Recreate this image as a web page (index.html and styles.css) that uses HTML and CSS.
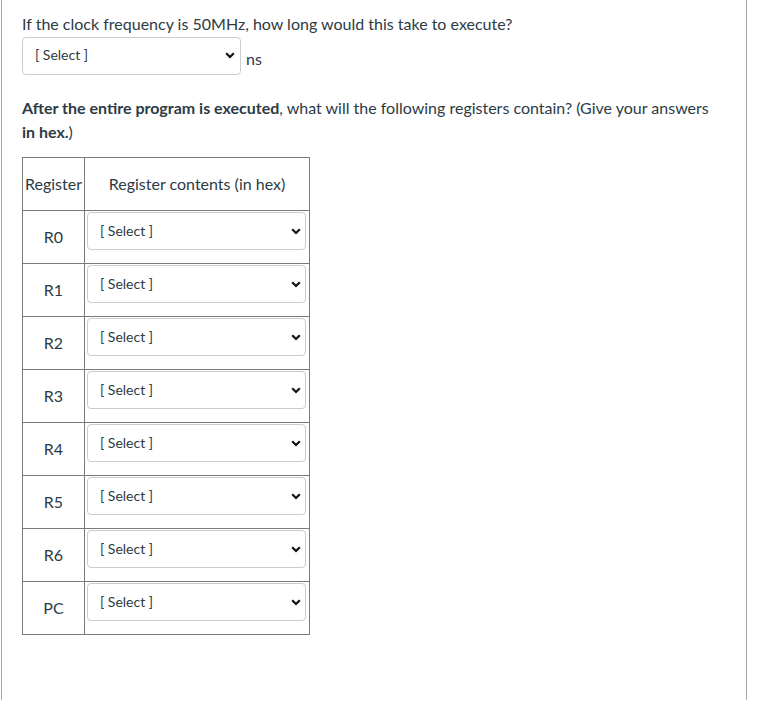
FILE: index.html
```html
<!DOCTYPE html>
<html>
<head>
<meta charset="utf-8">
<link rel="stylesheet" href="styles.css">
</head>
<body>
<div class="frame">
  <p class="q">If the clock frequency is 50MHz, how long would this take to execute?</p>
  <div class="answer-row">
    <div class="sel">
      <span class="sel-text">[ Select ]</span>
      <svg class="chev" width="10" height="7" viewBox="0 0 10 7"><polyline points="1.2,1.2 5,5 8.8,1.2" fill="none" stroke="#111" stroke-width="2.2"/></svg>
    </div>
    <span class="unit">ns</span>
  </div>
  <p class="q2"><strong>After the entire program is executed</strong>, what will the following registers contain? (Give your answers <strong>in hex.</strong>)</p>
  <table class="regs">
    <thead>
      <tr><th class="c1">Register</th><th class="c2">Register contents (in hex)</th></tr>
    </thead>
    <tbody>
      <tr><td class="c1">R0</td><td class="c2"><div class="sel"><span class="sel-text">[ Select ]</span><svg class="chev" width="10" height="7" viewBox="0 0 10 7"><polyline points="1.2,1.2 5,5 8.8,1.2" fill="none" stroke="#111" stroke-width="2.2"/></svg></div></td></tr>
      <tr><td class="c1">R1</td><td class="c2"><div class="sel"><span class="sel-text">[ Select ]</span><svg class="chev" width="10" height="7" viewBox="0 0 10 7"><polyline points="1.2,1.2 5,5 8.8,1.2" fill="none" stroke="#111" stroke-width="2.2"/></svg></div></td></tr>
      <tr><td class="c1">R2</td><td class="c2"><div class="sel"><span class="sel-text">[ Select ]</span><svg class="chev" width="10" height="7" viewBox="0 0 10 7"><polyline points="1.2,1.2 5,5 8.8,1.2" fill="none" stroke="#111" stroke-width="2.2"/></svg></div></td></tr>
      <tr><td class="c1">R3</td><td class="c2"><div class="sel"><span class="sel-text">[ Select ]</span><svg class="chev" width="10" height="7" viewBox="0 0 10 7"><polyline points="1.2,1.2 5,5 8.8,1.2" fill="none" stroke="#111" stroke-width="2.2"/></svg></div></td></tr>
      <tr><td class="c1">R4</td><td class="c2"><div class="sel"><span class="sel-text">[ Select ]</span><svg class="chev" width="10" height="7" viewBox="0 0 10 7"><polyline points="1.2,1.2 5,5 8.8,1.2" fill="none" stroke="#111" stroke-width="2.2"/></svg></div></td></tr>
      <tr><td class="c1">R5</td><td class="c2"><div class="sel"><span class="sel-text">[ Select ]</span><svg class="chev" width="10" height="7" viewBox="0 0 10 7"><polyline points="1.2,1.2 5,5 8.8,1.2" fill="none" stroke="#111" stroke-width="2.2"/></svg></div></td></tr>
      <tr><td class="c1">R6</td><td class="c2"><div class="sel"><span class="sel-text">[ Select ]</span><svg class="chev" width="10" height="7" viewBox="0 0 10 7"><polyline points="1.2,1.2 5,5 8.8,1.2" fill="none" stroke="#111" stroke-width="2.2"/></svg></div></td></tr>
      <tr><td class="c1">PC</td><td class="c2"><div class="sel"><span class="sel-text">[ Select ]</span><svg class="chev" width="10" height="7" viewBox="0 0 10 7"><polyline points="1.2,1.2 5,5 8.8,1.2" fill="none" stroke="#111" stroke-width="2.2"/></svg></div></td></tr>
    </tbody>
  </table>
</div>
</body>
</html>
```
FILE: styles.css
```css
html, body {
  margin: 0;
  padding: 0;
  background: #fff;
}
body {
  font-family: Lato, "Liberation Sans", sans-serif;
  font-size: 16px;
  line-height: 24px;
  color: #2d3b45;
}
.frame {
  box-sizing: border-box;
  margin-left: 1px;
  width: 746px;
  height: 700px;
  border-left: 1px solid #a8a8a8;
  border-right: 1px solid #a8a8a8;
  padding: 12px 30px 0 20px;
}
.q {
  margin: 0;
}
.answer-row {
  display: flex;
  align-items: flex-start;
  margin-top: 1px;
}
.sel {
  box-sizing: border-box;
  width: 219px;
  height: 38px;
  border: 1px solid #c7cdd1;
  border-radius: 4px;
  background: #fff;
  display: flex;
  align-items: center;
  justify-content: space-between;
  padding: 0 5px 0 12px;
}
.answer-row .sel {
  padding-bottom: 1px;
}
.sel-text {
  font-size: 14px;
  line-height: 20px;
  color: #2d3b45;
  margin-top: -2px;
}
.chev {
  display: block;
}
.unit {
  margin-left: 5px;
  padding-top: 10px;
}
.q2 {
  margin: 21px 0 0 0;
}
.q2 strong {
  font-weight: 700;
}
.regs {
  margin-top: 13px;
  border-collapse: separate;
  border-spacing: 0;
  border-top: 1px solid #7a7a7a;
  border-left: 1px solid #7a7a7a;
}
.regs th, .regs td {
  border-right: 1px solid #7a7a7a;
  border-bottom: 1px solid #7a7a7a;
  padding: 0;
  font-weight: 400;
}
.regs th {
  height: 51px;
  padding-bottom: 1px;
  vertical-align: middle;
  text-align: center;
}
.regs .c1 {
  width: 61px;
  text-align: center;
}
.regs th.c2 {
  width: 224px;
}
.regs td.c1 {
  height: 51px;
  padding-bottom: 1px;
  vertical-align: middle;
}
.regs td.c2 {
  width: 219px;
  vertical-align: top;
  padding: 1px 3px 13px 2px;
}
.regs td .sel {
  padding-right: 4px;
}
.regs td .sel-text {
  margin-top: 0;
}
```
